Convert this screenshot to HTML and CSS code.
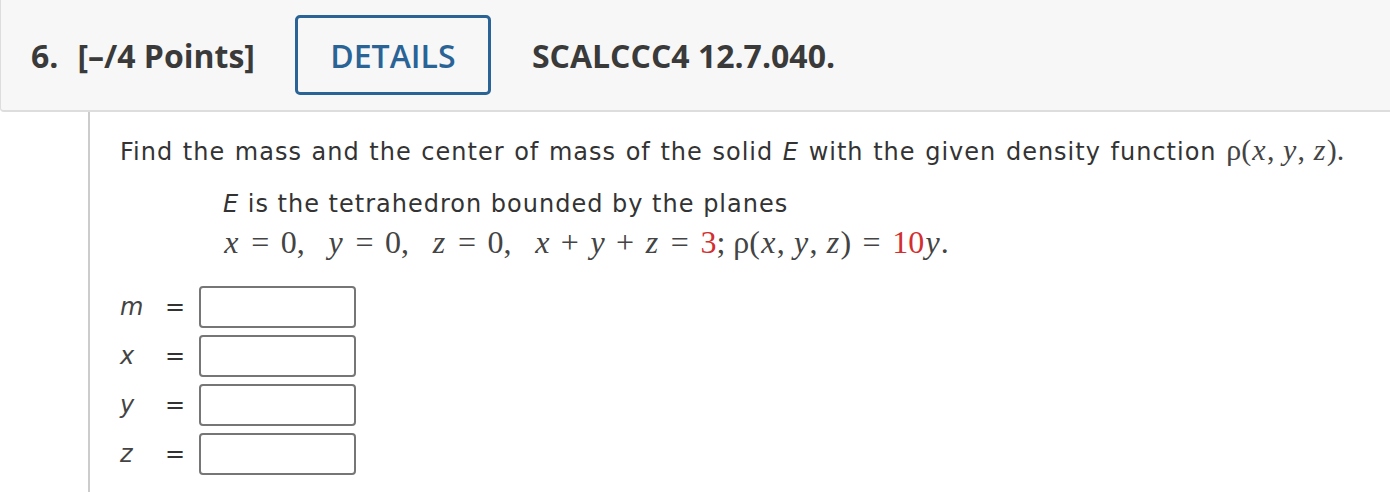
FILE: index.html
```html
<!DOCTYPE html>
<html lang="en">
<head>
    <meta charset="UTF-8">
    <title>Question 6</title>
    <link rel="stylesheet" href="styles.css">
</head>
<body>
    <div class="question-header">
        <span class="q-number">6.</span>
        <span class="q-points">[&ndash;/4 Points]</span>
        <button class="details-button">DETAILS</button>
        <span class="q-code">SCALCCC4 12.7.040.</span>
    </div>

    <div class="question-body">
        <p class="prompt">Find the mass and the center of mass of the solid <i>E</i> with the given density function <span class="math small">&rho;(<i>x</i>,<span class="th"></span><i>y</i>,<span class="th"></span><i>z</i>).</span></p>

        <div class="given">
            <div><i>E</i> is the tetrahedron bounded by the planes</div>
            <div class="math math-line"><i>x</i><span class="op">=</span>0,<span class="sp"></span><i>y</i><span class="op">=</span>0,<span class="sp"></span><i>z</i><span class="op">=</span>0,<span class="sp"></span><i>x</i><span class="bin">+</span><i>y</i><span class="bin">+</span><i>z</i><span class="op">=</span><span class="red">3</span>;<span class="th"></span>&rho;(<i>x</i>,<span class="th"></span><i>y</i>,<span class="th"></span><i>z</i>)<span class="op">=</span><span class="red">10</span><i>y</i>.</div>
        </div>

        <!-- Answer fields -->
        <div class="answers">
            <div class="answer-row">
                <span class="var">m</span>
                <span class="eq">=</span>
                <input type="text" class="answer-box">
            </div>
            <div class="answer-row">
                <span class="var">x</span>
                <span class="eq">=</span>
                <input type="text" class="answer-box">
            </div>
            <div class="answer-row">
                <span class="var">y</span>
                <span class="eq">=</span>
                <input type="text" class="answer-box">
            </div>
            <div class="answer-row">
                <span class="var">z</span>
                <span class="eq">=</span>
                <input type="text" class="answer-box">
            </div>
        </div>
    </div>
</body>
</html>
```

FILE: styles.css
```css
body {
    margin: 0;
    font-family: "DejaVu Sans", Verdana, sans-serif;
    color: #333;
    background: #fff;
}

.question-header {
    display: flex;
    align-items: center;
    height: 110px;
    padding-left: 30px;
    background: #f7f7f7;
    border-left: 1px solid #ddd;
    border-bottom: 2px solid #ddd;
    border-bottom-left-radius: 4px;
    font-family: "Open Sans", "Liberation Sans", sans-serif;
    font-size: 32px;
    font-weight: bold;
    color: #3a3a3a;
}

.q-number {
    margin-right: 19px;
}

.details-button {
    margin-left: 40px;
    width: 196px;
    height: 80px;
    background: transparent;
    border: 3px solid #2a6496;
    border-radius: 5px;
    color: #2a6496;
    font-family: inherit;
    font-size: 32px;
    font-weight: 600;
    cursor: pointer;
}

.q-code {
    margin-left: 41px;
}

.question-body {
    margin-left: 88px;
    min-height: 380px;
    padding: 18px 0 0 30px;
    border-left: 2px solid #ccc;
    font-size: 24px;
    letter-spacing: 1px;
}

.prompt {
    margin: 0 0 13px;
    line-height: 40px;
    word-spacing: 1px;
}

.math {
    font-family: "Liberation Serif", "DejaVu Serif", serif;
    font-size: 32px;
    letter-spacing: 0;
    word-spacing: 0;
    color: #444;
}

.math.small {
    font-size: 30px;
}

.math i {
    font-style: italic;
    margin: 0 0.04em;
}

.op {
    margin: 0 0.36em;
}

.bin {
    margin: 0 0.32em;
}

.sp {
    display: inline-block;
    width: 0.7em;
}

.th {
    display: inline-block;
    width: 0.25em;
}

.red {
    color: #d32f2f;
}

.given {
    margin-left: 103px;
    line-height: 38px;
}

.answers {
    margin-top: 25px;
    display: flex;
    flex-direction: column;
    gap: 7px;
}

.answer-row {
    display: flex;
    align-items: center;
}

.var {
    width: 45px;
    font-style: italic;
    letter-spacing: 0;
    color: #444;
}

.eq {
    width: 34px;
}

.answer-box {
    width: 157px;
    height: 42px;
    box-sizing: border-box;
    border: 2px solid #767676;
    border-radius: 4px;
    background: #fff;
}
```
